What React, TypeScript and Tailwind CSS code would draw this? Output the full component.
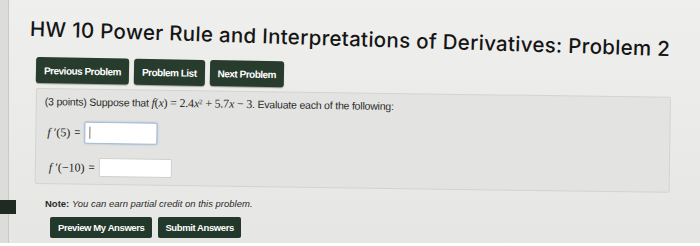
import React from 'react';

const font = { fontFamily: '"Liberation Sans", Arial, sans-serif' };

const NavButton = ({ label }: { label: string }) => (
  <button className="h-[26px] px-[8px] bg-[#283c2e] text-white text-[10px] font-bold tracking-[-0.5px] rounded-[3px] shadow-[0_1px_1px_rgba(0,0,0,0.3)]">
    {label}
  </button>
);

const Math = ({ children }: { children: React.ReactNode }) => (
  <span className="text-[12px]" style={{ fontFamily: '"Liberation Serif", "DejaVu Serif", serif' }}>
    {children}
  </span>
);

export default function App() {
  return (
    <div
      className="w-[700px] h-[246px] overflow-hidden flex flex-col bg-gradient-to-b from-[#efefed] to-[#e6e7e4] text-[#1e1e1e]"
      style={font}
    >
      <div className="flex flex-1">
        {/* left edge of the page */}
        <div className="w-[16px] shrink-0 flex flex-col">
          <div className="flex-1 flex">
            <div className="w-[8px] bg-[#dcdcda]" />
            <div className="w-px bg-[#c9c9c6]" />
          </div>
          <div className="h-[14px] bg-[#1f2b22]" />
          <div className="h-[29px] flex">
            <div className="w-[8px] bg-[#dcdcda]" />
            <div className="w-px bg-[#c9c9c6]" />
          </div>
        </div>

        {/* the photo is taken a little askew, hence the small rotations */}
        <div className="flex-1 flex flex-col pl-[14px] pr-[30px]">
          <h1
            className="mt-[17px] text-[20.5px] leading-[24px] font-medium tracking-[0.3px] text-[#151515] whitespace-nowrap rotate-[1.8deg] origin-left"
            style={{ fontFamily: 'Inter, "Liberation Sans", sans-serif' }}
          >
            HW 10 Power Rule and Interpretations of Derivatives: Problem 2
          </h1>

          <div className="mt-[16px] ml-[6px] flex gap-[5px] rotate-[1deg] origin-left">
            <NavButton label="Previous Problem" />
            <NavButton label="Problem List" />
            <NavButton label="Next Problem" />
          </div>

          <div className="mt-[5px] ml-[6px] h-[96px] border border-[#d3d4d0] bg-[#e3e4e1] rounded-[2px] px-[8px] pt-[6px] text-[10.5px] rotate-[0.8deg] origin-top-left">
            <p className="leading-[12px] text-[#2a2a2a] whitespace-nowrap tracking-[-0.2px]">
              (3 points) Suppose that <Math><i>f</i>(<i>x</i>) = 2.4<i>x</i><sup className="text-[7px]">2</sup> + 5.7<i>x</i> − 3</Math>. Evaluate each of the following:
            </p>

            <div className="mt-[14px] ml-[3px] flex items-center gap-[4px]">
              <Math><i>f</i> ′(5)</Math>
              <span>=</span>
              <div className="w-[73px] h-[22px] bg-white border border-[#a9bcd6] rounded-[2px] shadow-[0_0_2px_rgba(100,140,200,0.6)] flex items-center pl-[4px]">
                <div className="w-px h-[12px] bg-[#777]" />
              </div>
            </div>

            <div className="mt-[14px] ml-[5px] flex items-center gap-[4px]">
              <Math><i>f</i> ′(−10)</Math>
              <span>=</span>
              <div className="w-[73px] h-[19px] bg-white border border-[#d0d0cd] rounded-[2px]" />
            </div>
          </div>

          <p className="mt-[13px] ml-[15px] text-[9.5px] text-[#2a2a2a]">
            <b>Note:</b> <i>You can earn partial credit on this problem.</i>
          </p>

          <div className="mt-[6px] ml-[20px] flex gap-[6px]">
            <button className="h-[21px] px-[8px] bg-[#22382a] text-white text-[9.5px] font-bold tracking-[-0.4px] rounded-[2px]">
              Preview My Answers
            </button>
            <button className="h-[21px] px-[7px] bg-[#22382a] text-white text-[9.5px] font-bold tracking-[-0.4px] rounded-[2px]">
              Submit Answers
            </button>
          </div>
        </div>
      </div>
      <div className="h-[3px] bg-white" />
    </div>
  );
}
